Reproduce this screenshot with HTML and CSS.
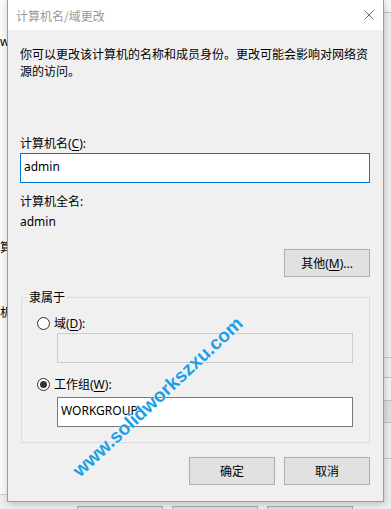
FILE: index.html
```html
<!DOCTYPE html>
<html lang="zh-CN">
<head>
<meta charset="utf-8">
<title>计算机名/域更改</title>
<link rel="stylesheet" href="styles.css">
</head>
<body>
<div class="bg-win">
  <div class="bg-main">
    <div class="bg-left">
      <span class="bg-t bg-t1">w</span>
      <span class="bg-t bg-t2">算</span>
      <span class="bg-t bg-t3">机</span>
    </div>
    <div class="bg-right">
      <div class="r-seg r1"></div>
      <div class="r-seg r2"></div>
      <div class="r-seg r3"></div>
      <div class="r-seg r4"></div>
      <div class="r-seg r5"></div>
      <div class="r-seg r6"></div>
    </div>
  </div>
  <div class="bg-foot">
    <span class="bg-btn"></span>
    <span class="bg-btn"></span>
    <span class="bg-btn"></span>
  </div>
</div>

<div class="dialog">
  <div class="titlebar">
    <span class="title">计算机名/域更改</span>
    <svg class="close" width="10" height="10" viewBox="0 0 10 10" aria-hidden="true">
      <path d="M0.5 0.5 L9.5 9.5 M9.5 0.5 L0.5 9.5" stroke="#6e6e6e" stroke-width="1" fill="none"/>
    </svg>
  </div>
  <div class="body">
    <p class="desc">你可以更改该计算机的名称和成员身份。更改可能会影响对网络资源的访问。</p>
    <div class="label label-name">计算机名(<u>C</u>):</div>
    <div class="input input-focus">admin</div>
    <div class="label label-full">计算机全名:</div>
    <div class="full-value">admin</div>
    <div class="row-right">
      <button class="btn btn-other">其他(<u>M</u>)...</button>
    </div>
    <div class="group">
      <span class="group-title">隶属于</span>
      <div class="radio-row">
        <span class="radio"></span>
        <span>域(<u>D</u>):</span>
      </div>
      <div class="input input-disabled input-sub"></div>
      <div class="radio-row radio-row2">
        <span class="radio radio-on"></span>
        <span>工作组(<u>W</u>):</span>
      </div>
      <div class="input input-plain input-sub input-sub2">WORKGROUP</div>
    </div>
    <div class="footer">
      <button class="btn">确定</button>
      <button class="btn">取消</button>
    </div>
  </div>
</div>

<span class="watermark">www.solidworkszxu.com</span>
</body>
</html>
```

FILE: styles.css
```css
* {
  box-sizing: border-box;
}

html,
body {
  margin: 0;
  padding: 0;
}

body {
  width: 391px;
  height: 509px;
  overflow: hidden;
  position: relative;
  background: #f0f0f0;
  font-family: "Noto Sans", "Noto Sans CJK SC", sans-serif;
  font-size: 12px;
  color: #000;
}

/* ---------- background window ---------- */
.bg-win {
  height: 509px;
  display: flex;
  flex-direction: column;
}

.bg-main {
  height: 495px;
  display: flex;
  justify-content: space-between;
}

.bg-left {
  width: 7px;
  background: #fbfbfb;
  border-bottom: 1px solid #d0d0d0;
  display: flex;
  flex-direction: column;
  font-family: "Noto Sans CJK SC", sans-serif;
  line-height: 17px;
}

.bg-t {
  display: block;
  white-space: nowrap;
}

.bg-t1 {
  margin-top: 33px;
  font-family: "Noto Sans", sans-serif;
}

.bg-t2 {
  margin-top: 188px;
}

.bg-t3 {
  margin-top: 48px;
}

.bg-right {
  width: 8px;
  background: #f2f2f2;
  display: flex;
  flex-direction: column;
}

.r-seg {
  border-bottom: 1px solid #c6c6c6;
}

.r1 {
  height: 13px;
  background: #fafafa;
}

.r2 {
  height: 345px;
}

.r3 {
  height: 20px;
}

.r4 {
  height: 23px;
  background: #f6f6f6;
}

.r5 {
  height: 22px;
  background: #e4e4e4;
}

.r6 {
  height: 36px;
}

.bg-foot {
  height: 14px;
  display: flex;
  gap: 9px;
  padding: 11px 0 0 77px;
  background: #f0f0f0;
}

.bg-btn {
  width: 86px;
  height: 12px;
  background: #e1e1e1;
  border: 1px solid #adadad;
}

/* ---------- dialog ---------- */
.dialog {
  position: absolute;
  left: 7px;
  top: -1px;
  width: 377px;
  background: #f0f0f0;
  border: 1px solid #9c9c9c;
  box-shadow: 1px 2px 8px rgba(0, 0, 0, 0.22);
}

.titlebar {
  height: 30px;
  background: #fff;
  display: flex;
  align-items: center;
  justify-content: space-between;
  padding: 0 9px 0 8px;
}

.title {
  font-family: "Noto Sans CJK SC", sans-serif;
  color: #999;
  font-size: 12px;
  line-height: 17px;
}

.close {
  display: block;
}

.body {
  padding: 15px 13px 16px 12px;
  font-family: "Noto Sans", "Noto Sans CJK SC", sans-serif;
  line-height: 17px;
}

.desc {
  margin: 0;
  font-family: "Noto Sans CJK SC", sans-serif;
  line-height: 17px;
}

.label {
  height: 17px;
}

.label-name {
  margin-top: 56px;
}

.label-full {
  margin-top: 10px;
}

.full-value {
  margin-top: 3px;
  height: 17px;
}

u {
  text-decoration: underline;
  text-underline-offset: 2px;
}

.input {
  height: 30px;
  line-height: 26px;
  padding: 0 3px 2px;
  background: #fff;
  border: 1px solid #7a7a7a;
}

.input-focus {
  margin-top: 1px;
  width: 350px;
  border-color: #0078d7;
}

.input-disabled {
  background: #f0f0f0;
  border-color: #cccccc;
}

.input-sub {
  margin-left: 20px;
  width: 296px;
  margin-top: 1px;
}

.input-sub2 {
  margin-top: 4px;
}

.row-right {
  margin-top: 19px;
  display: flex;
  justify-content: flex-end;
}

.btn {
  width: 86px;
  height: 28px;
  margin: 0;
  padding: 0;
  background: #e1e1e1;
  border: 1px solid #adadad;
  border-radius: 0;
  font-family: "Noto Sans", "Noto Sans CJK SC", sans-serif;
  font-size: 12px;
  color: #000;
  line-height: 17px;
}

/* ---------- group box ---------- */
.group {
  position: relative;
  margin: 20px 0 0 1px;
  width: 349px;
  border: 1px solid #dcdcdc;
  padding: 17px 16px 15px 15px;
}

.group-title {
  position: absolute;
  top: -10px;
  left: 5px;
  padding: 0 2px;
  background: #f0f0f0;
  line-height: 17px;
  font-family: "Noto Sans CJK SC", sans-serif;
}

.radio-row {
  height: 17px;
  display: flex;
  align-items: center;
  gap: 4px;
}

.radio-row2 {
  margin-top: 13px;
}

.radio {
  width: 13px;
  height: 13px;
  border: 1px solid #333;
  border-radius: 50%;
  background: #fff;
  display: flex;
  align-items: center;
  justify-content: center;
  flex: none;
}

.radio-on::after {
  content: "";
  width: 7px;
  height: 7px;
  border-radius: 50%;
  background: #333;
}

/* ---------- footer ---------- */
.footer {
  margin-top: 14px;
  display: flex;
  justify-content: flex-end;
  gap: 9px;
}

/* ---------- watermark ---------- */
.watermark {
  position: absolute;
  left: 158px;
  top: 397px;
  transform: translate(-50%, -50%) rotate(-43deg);
  font-family: "Liberation Sans", sans-serif;
  font-weight: bold;
  font-size: 19px;
  line-height: 22px;
  color: #1b9fe6;
  white-space: nowrap;
  text-shadow: 0 0 1px #fff;
}
```
